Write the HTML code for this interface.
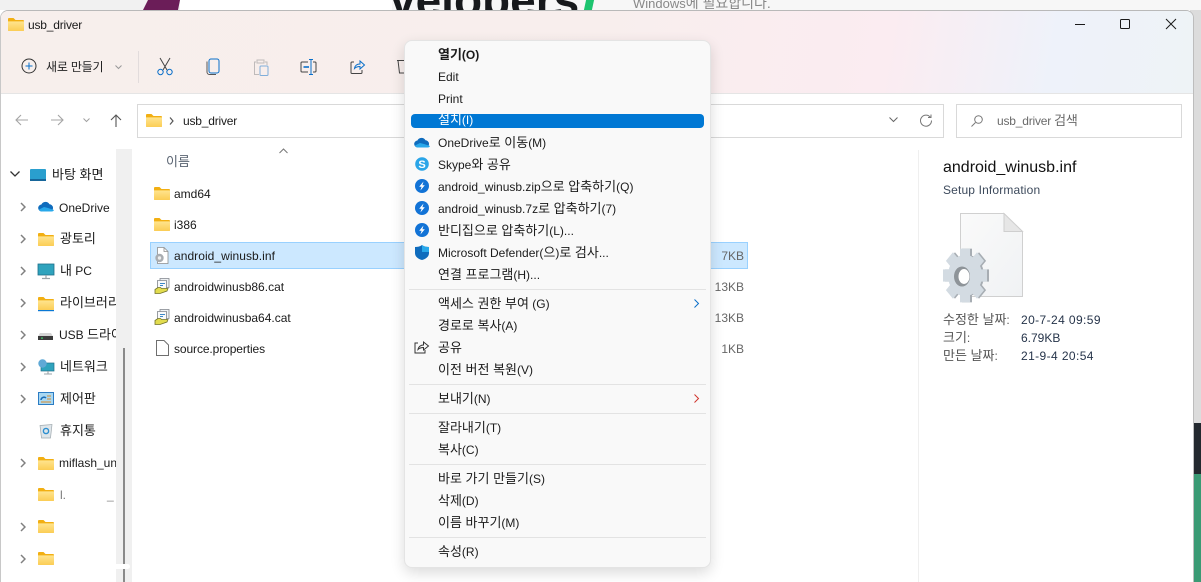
<!DOCTYPE html>
<html lang="ko"><head><meta charset="utf-8">
<style>
html,body{margin:0;padding:0;width:1201px;height:582px;overflow:hidden;background:#fff}
*{box-sizing:border-box}
body{position:relative;font-family:"Liberation Sans","Noto Sans CJK KR",sans-serif;font-size:12px;color:#1a1a1a}
.t{position:absolute;white-space:nowrap;line-height:16px;height:16px;margin-top:1px}
.k{font-size:13px;line-height:14px}
.a{position:absolute}
svg{position:absolute;overflow:visible}
.m{color:#1b1b1b}
.sep{position:absolute;left:409px;width:297px;height:1px;background:#e3e3e3}
.sz{color:#666;text-align:right;width:50px}
.dim{color:#555}
.n{letter-spacing:.4px}
</style></head><body>
<svg width="0" height="0" style="position:absolute"><defs>
<linearGradient id="fg" x1="0" y1="0" x2="0" y2="1"><stop offset="0" stop-color="#ffe48f"/><stop offset="1" stop-color="#fbcd55"/></linearGradient>
<symbol id="folder" viewBox="0 0 16 14"><path d="M0 2a1 1 0 0 1 1-1h4.500l2 2H15a1 1 0 0 1 1 1v9a1 1 0 0 1-1 1H1a1 1 0 0 1-1-1z" fill="#f2af12"/><path d="M0 4.400h16V13a1 1 0 0 1-1 1H1a1 1 0 0 1-1-1z" fill="url(#fg)"/></symbol>
<symbol id="cloud" viewBox="0 0 16 10"><path d="M4 10a3.500 3.500 0 0 1-.6-7A4.500 4.500 0 0 1 11.500 2.800 3.700 3.700 0 0 1 12.500 10z" fill="#0f6cbd"/><path d="M1 8 6 5.500 10 6.500 16 8.500A2.500 2.500 0 0 1 13.500 10H4A3.500 3.500 0 0 1 1 8z" fill="#28a8ea"/></symbol>
<symbol id="bolt" viewBox="0 0 14 14"><circle cx="7" cy="7" r="7" fill="#1273d6"/><path d="M8.500 2.500 4.200 7.800H6.600L5.400 11.500 9.800 6.200H7.400z" fill="#fff"/></symbol>
<symbol id="chev" viewBox="0 0 6 10"><path d="M1 1l4 4-4 4" fill="none" stroke="#808080" stroke-width="1.500"/></symbol>
<symbol id="cat" viewBox="0 0 16 16"><path d="M6 0.500h9v9H6z" fill="#eef1f4" stroke="#7f848b" stroke-width=".8"/><path d="M3.500 2.500h9v9h-9z" fill="#f8f9fa" stroke="#7f848b" stroke-width=".8"/><path d="M6 5.500h5M6 7.500h3" stroke="#3c88c8"/><path d="M1 11.500 4 9.500h2.500l1 1H14l-1 2.500-7 2.500H1z" fill="#e2dc4e" stroke="#72722a" stroke-width=".8"/></symbol>
</defs></svg>

<!-- background behind window -->
<div class="a" style="left:0;top:0;width:1201px;height:10px;background:#f1f1f1"></div>
<div class="a" style="left:180px;top:0;width:212px;height:10px;background:#fff"></div>
<div class="a" style="left:392px;top:0;width:809px;height:10px;background:#f7f7f7"></div>
<svg style="left:0;top:0" width="200" height="11"><path d="M143 10 148 0H180L178 10z" fill="#6b1d58"/></svg>
<div class="a" style="left:0;top:0;width:1201px;height:10px;overflow:hidden">
  <div class="t" style="left:390px;top:-26px;font-size:46px;line-height:50px;height:50px;font-weight:700;color:#17191c">velopers</div>
  <div class="a" style="left:585px;top:0;width:8px;height:10px;background:#1dc46f;transform:skewX(-12deg)"></div>
  <div class="t" style="left:633px;top:-6px;font-size:13px;color:#888">Windows<span style="font-size:14px">에 필요합니다.</span></div>
</div>
<!-- right strip -->
<div class="a" style="left:1190px;top:10px;width:11px;height:413px;background:#dcdcdc"></div>
<div class="a" style="left:1194px;top:423px;width:7px;height:51px;background:#23292f"></div>
<div class="a" style="left:1194px;top:474px;width:7px;height:108px;background:#3a9a74"></div>

<!-- window -->
<div class="a" style="left:0;top:10px;width:1194px;height:572px;background:#fff;border-radius:8px 8px 0 0;border-top:1px solid #b9b9b9;border-right:1px solid #bdbdbd;border-left:1px solid #c8c8c8;overflow:hidden">
  <div class="a" style="left:0;top:0;width:1194px;height:83px;background:linear-gradient(100deg,#f7efec 0%,#f8eeed 50%,#fbecf1 74%,#eef2fa 88%,#eef3f6 100%);border-bottom:1px solid #e5e5e5"></div>
</div>

<!-- titlebar -->
<svg style="left:8px;top:17px" width="16" height="14"><use href="#folder" width="16" height="14"/></svg>
<div class="t" style="left:28px;top:16px;color:#1a1a1a;letter-spacing:-.2px">usb_driver</div>
<svg style="left:1075px;top:17px" width="100" height="14" fill="none" stroke="#1a1a1a" stroke-width="1">
<path d="M0 7.500H10"/><rect x="45.500" y="2.500" width="9" height="9" rx="1"/><path d="M91 2 101 12M101 2 91 12"/></svg>

<!-- toolbar -->
<svg style="left:21px;top:58px" width="16" height="16" fill="none" stroke="#1a1a1a"><circle cx="8" cy="8" r="7" stroke="#333"/><path d="M8 4.500v7M4.500 8h7" stroke="#0a6fc9"/></svg>
<div class="t" style="left:46px;top:58px;color:#222;letter-spacing:-.2px">새로 만들기</div>
<svg style="left:115px;top:65px" width="7" height="5" fill="none" stroke="#999"><path d="M.5.500 3.500 3.500 6.500.500"/></svg>
<div class="a" style="left:138px;top:51px;width:1px;height:32px;background:#e2dcdc"></div>
<svg style="left:157px;top:58px" width="16" height="18" fill="none" stroke="#444"><path d="M3 0l7 12M13 0 6 12"/><circle cx="3.500" cy="14" r="2.700" stroke="#0a6fc9"/><circle cx="12.500" cy="14" r="2.700" stroke="#0a6fc9"/></svg>
<svg style="left:206px;top:58px" width="14" height="17" fill="none"><rect x="3" y="1" width="10" height="14" rx="2" stroke="#0a6fc9"/><path d="M1 3.500V14a2.500 2.500 0 0 0 2.500 2.500H10" stroke="#555"/></svg>
<svg style="left:253px;top:59px" width="16" height="17" fill="none" opacity=".5"><path d="M3 3H1.500V15.500H6M12 3H14V6" stroke="#888"/><rect x="4" y="1" width="7" height="3" stroke="#888"/><rect x="7" y="7" width="8" height="9.500" rx="1" stroke="#0a6fc9"/></svg>
<svg style="left:300px;top:59px" width="17" height="16" fill="none"><path d="M8 3H2a1 1 0 0 0-1 1v8a1 1 0 0 0 1 1h6M13 3h2a1 1 0 0 1 1 1v8a1 1 0 0 1-1 1h-2" stroke="#444"/><path d="M3.500 8H9" stroke="#0a6fc9" stroke-width="1.600"/><path d="M9 .500h4M11 .500v15M9 15.500h4" stroke="#0a6fc9"/></svg>
<svg style="left:350px;top:59px" width="15" height="15" fill="none"><path d="M4 3H2a1 1 0 0 0-1 1v9.500a1 1 0 0 0 1 1h9a1 1 0 0 0 1-1V11" stroke="#444"/><path d="M4.500 9.500C5 6.500 7 5 10 5V2l4.500 4L10 10V7.500C8 7.500 6 8 4.500 9.500z" stroke="#0a6fc9"/></svg>
<svg style="left:397px;top:60px" width="10" height="14" fill="none" stroke="#444"><path d="M0 .500H10M1 .500 2.500 13H8"/></svg>

<!-- nav row -->
<svg style="left:15px;top:114px" width="14" height="12" fill="none" stroke="#a5a5a5" stroke-width="1.100"><path d="M13 6H1M6 1 1 6l5 5"/></svg>
<svg style="left:50px;top:114px" width="14" height="12" fill="none" stroke="#a5a5a5" stroke-width="1.100"><path d="M1 6H13M8 1l5 5-5 5"/></svg>
<svg style="left:83px;top:118px" width="7" height="5" fill="none" stroke="#a0a0a0"><path d="M.5.500 3.500 3.500 6.500.500"/></svg>
<svg style="left:110px;top:114px" width="12" height="13" fill="none" stroke="#555" stroke-width="1.100"><path d="M6 13V1M1 6l5-5 5 5"/></svg>
<div class="a" style="left:137px;top:104px;width:807px;height:34px;background:#fff;border:1px solid #d9d9d9"></div>
<svg style="left:146px;top:113px" width="16" height="14"><use href="#folder" width="16" height="14"/></svg>
<svg style="left:169px;top:117px" width="5" height="8"><path d="M1 .500l3 3.500-3 3.500" fill="none" stroke="#555" stroke-width="1.200"/></svg>
<div class="t" style="left:183px;top:112px;letter-spacing:-.2px">usb_driver</div>
<svg style="left:889px;top:117px" width="9" height="6" fill="none" stroke="#666"><path d="M.5.500 4.500 4.500 8.500.500"/></svg>
<svg style="left:920px;top:114px" width="12" height="12" fill="none" stroke="#777"><path d="M10.500 3.500A5.500 5.500 0 1 0 11.500 6.500"/><path d="M11 .500V3.500H8"/></svg>
<div class="a" style="left:956px;top:104px;width:226px;height:34px;background:#fff;border:1px solid #d9d9d9"></div>
<svg style="left:971px;top:115px" width="12" height="12" fill="none" stroke="#777"><circle cx="7.500" cy="4.500" r="3.800"/><path d="M4.500 7.500 .5 11.500"/></svg>
<div class="t" style="left:997px;top:112px;color:#6a6a6a;letter-spacing:-.2px">usb_driver <span class="k">검색</span></div>

<!-- sidebar -->
<div class="a" style="left:116px;top:149px;width:16px;height:433px;background:#f0f0f0"></div>
<div class="a" style="left:123px;top:348px;width:2px;height:234px;background:#8a8a8a"></div>
<svg style="left:10px;top:171px" width="10" height="6" fill="none" stroke="#333" stroke-width="1.300"><path d="M.5.500 5 5 9.500.500"/></svg>
<svg style="left:30px;top:169px" width="16" height="12"><rect width="16" height="11" rx="1" fill="#2a9fce"/><rect y="10" width="16" height="2" fill="#17669a"/></svg>
<div class="t" style="left:52px;top:166px"><span class="k">바탕 화면</span></div>

<svg style="left:20px;top:202px" width="6" height="10"><use href="#chev" width="6" height="10"/></svg>
<svg style="left:38px;top:201px" width="16" height="11"><use href="#cloud" width="16" height="11"/></svg>
<div class="t" style="left:59px;top:199px">OneDrive</div>

<svg style="left:20px;top:234px" width="6" height="10"><use href="#chev" width="6" height="10"/></svg>
<svg style="left:38px;top:232px" width="16" height="14"><use href="#folder" width="16" height="14"/></svg>
<div class="t" style="left:60px;top:230px"><span class="k">광토리</span></div>

<svg style="left:20px;top:266px" width="6" height="10"><use href="#chev" width="6" height="10"/></svg>
<svg style="left:38px;top:264px" width="16" height="15"><rect width="16" height="11" fill="#2fa3bd" stroke="#1f6f8a" stroke-width=".8"/><path d="M8 11v3M4 14.500h8" stroke="#9aa3a8" stroke-width="1.200"/></svg>
<div class="t" style="left:60px;top:262px"><span class="k">내</span> PC</div>

<svg style="left:20px;top:298px" width="6" height="10"><use href="#chev" width="6" height="10"/></svg>
<svg style="left:38px;top:296px" width="16" height="15"><use href="#folder" width="16" height="14"/><rect y="14" width="16" height="1.200" fill="#0a78d4"/></svg>
<div class="a" style="left:60px;top:294px;width:56px;height:17px;overflow:hidden"><div class="t" style="left:0;top:0"><span class="k">라이브러리</span></div></div>

<svg style="left:20px;top:330px" width="6" height="10"><use href="#chev" width="6" height="10"/></svg>
<svg style="left:38px;top:333px" width="15" height="7"><path d="M2 0H13L15 3.500H0z" fill="#d4d4d4"/><rect y="3" width="15" height="4" fill="#3a3a3a"/><rect x="3" y="4.500" width="2" height="1.200" fill="#3ecf6a"/></svg>
<div class="a" style="left:59px;top:326px;width:57px;height:17px;overflow:hidden"><div class="t" style="left:0;top:0">USB <span class="k">드라이브</span></div></div>

<svg style="left:20px;top:362px" width="6" height="10"><use href="#chev" width="6" height="10"/></svg>
<svg style="left:38px;top:359px" width="16" height="16"><rect x="3" y="4" width="13" height="8" fill="#2fa3bd" stroke="#1f6f8a" stroke-width=".7"/><circle cx="4.500" cy="4.500" r="4.200" fill="#5fa9d6"/><path d="M10 12v2.500M6 15h8" stroke="#9aa3a8" stroke-width="1.100"/></svg>
<div class="t" style="left:60px;top:358px"><span class="k">네트워크</span></div>

<svg style="left:20px;top:394px" width="6" height="10"><use href="#chev" width="6" height="10"/></svg>
<svg style="left:38px;top:392px" width="16" height="13"><rect x=".5" y=".5" width="15" height="12" fill="#a9d8f2" stroke="#2b7cc4"/><path d="M3 8a3 3 0 0 1 5-2" fill="none" stroke="#1b6cb5" stroke-width="1.500"/><path d="M9 4h4M9 7h4M3 10h10" stroke="#d98a2c"/></svg>
<div class="t" style="left:60px;top:390px"><span class="k">제어판</span></div>

<svg style="left:40px;top:423px" width="12" height="15"><path d="M0 2.500 12 1.500 10.500 15H1.500z" fill="#dfe6ea" stroke="#9fa9ae" stroke-width=".7"/><circle cx="6" cy="8" r="2.600" fill="none" stroke="#2d8fd0" stroke-width="1.400"/></svg>
<div class="t" style="left:60px;top:422px"><span class="k">휴지통</span></div>

<svg style="left:20px;top:458px" width="6" height="10"><use href="#chev" width="6" height="10"/></svg>
<svg style="left:38px;top:456px" width="16" height="14"><use href="#folder" width="16" height="14"/></svg>
<div class="a" style="left:59px;top:454px;width:57px;height:17px;overflow:hidden"><div class="t" style="left:0;top:0">miflash_unlock</div></div>

<svg style="left:38px;top:487px" width="16" height="14"><use href="#folder" width="16" height="14"/></svg>
<div class="t" style="left:60px;top:486px;color:#777">l.</div>
<div class="t" style="left:107px;top:486px;color:#888">_</div>

<svg style="left:20px;top:522px" width="6" height="10"><use href="#chev" width="6" height="10"/></svg>
<svg style="left:38px;top:519px" width="16" height="14"><use href="#folder" width="16" height="14"/></svg>
<svg style="left:20px;top:554px" width="6" height="10"><use href="#chev" width="6" height="10"/></svg>
<svg style="left:38px;top:551px" width="16" height="14"><use href="#folder" width="16" height="14"/></svg>
<div class="a" style="left:108px;top:564px;width:22px;height:5px;background:#fff;border-radius:3px"></div>

<!-- file list -->
<div class="t" style="left:166px;top:153px;color:#5a6472"><span class="k">이름</span></div>
<svg style="left:279px;top:148px" width="9" height="6" fill="none" stroke="#777"><path d="M.5 5 4.500 1 8.500 5"/></svg>
<div class="a" style="left:150px;top:242px;width:598px;height:27px;background:#cce8ff;border:1px solid #99d1ff"></div>

<svg style="left:154px;top:186px" width="16" height="14"><use href="#folder" width="16" height="14"/></svg>
<div class="t" style="left:174px;top:185px">amd64</div>
<svg style="left:154px;top:217px" width="16" height="14"><use href="#folder" width="16" height="14"/></svg>
<div class="t" style="left:174px;top:216px">i386</div>
<svg style="left:154px;top:247px" width="15" height="17"><path d="M3.500.500H10L14 4.500V16.500H3.500z" fill="#fff" stroke="#8d8d8d" stroke-width=".8"/><path d="M10 .500V4.500H14" fill="none" stroke="#8d8d8d" stroke-width=".8"/><circle cx="5.500" cy="11" r="4.200" fill="#a9adb1"/><circle cx="5.500" cy="11" r="1.700" fill="#eee"/></svg>
<div class="t" style="left:174px;top:247px;letter-spacing:.05px">android_winusb.inf</div>
<svg style="left:154px;top:278px" width="16" height="16"><use href="#cat" width="16" height="16"/></svg>
<div class="t" style="left:174px;top:278px">androidwinusb86.cat</div>
<svg style="left:154px;top:309px" width="16" height="16"><use href="#cat" width="16" height="16"/></svg>
<div class="t" style="left:174px;top:309px">androidwinusba64.cat</div>
<svg style="left:156px;top:340px" width="13" height="16"><path d="M.5.500H8L12.500 5V15.500H.5z" fill="#fff" stroke="#6f6f6f"/></svg>
<div class="t" style="left:174px;top:340px;letter-spacing:-.1px">source.properties</div>

<div class="t sz" style="left:694px;top:247px">7KB</div>
<div class="t sz" style="left:694px;top:278px">13KB</div>
<div class="t sz" style="left:694px;top:309px">13KB</div>
<div class="t sz" style="left:694px;top:340px">1KB</div>

<!-- details pane -->
<div class="a" style="left:918px;top:150px;width:1px;height:432px;background:#efefef"></div>
<div class="t" style="left:943px;top:157px;font-size:16px;line-height:20px;height:20px;color:#111">android_winusb.inf</div>
<div class="t" style="left:943px;top:181px;color:#3d4a5c;letter-spacing:.15px">Setup Information</div>
<svg style="left:943px;top:212px" width="82" height="92">
<defs><linearGradient id="pg" x1="0" y1="0" x2="1" y2="1"><stop offset="0" stop-color="#fafafa"/><stop offset="1" stop-color="#f0f2f4"/></linearGradient></defs>
<path d="M17.500 1.500H61L79.500 19.500V84.500H17.500z" fill="url(#pg)" stroke="#d0d0d0"/>
<path d="M61 1.500V19.500H79.500z" fill="#e6e6e6" stroke="#cfcfcf"/>
<g transform="translate(24 63.500) scale(1 1.220)" fill="#a7adb3">
<circle r="17"/>
<rect x="-5" y="-22" width="10" height="44"/>
<rect x="-5" y="-22" width="10" height="44" transform="rotate(45)"/>
<rect x="-5" y="-22" width="10" height="44" transform="rotate(90)"/>
<rect x="-5" y="-22" width="10" height="44" transform="rotate(135)"/>
</g>
<g transform="translate(22 63.500) scale(1 1.220)" fill="#d3dbe2">
<circle r="17"/>
<rect x="-5" y="-22" width="10" height="44"/>
<rect x="-5" y="-22" width="10" height="44" transform="rotate(45)"/>
<rect x="-5" y="-22" width="10" height="44" transform="rotate(90)"/>
<rect x="-5" y="-22" width="10" height="44" transform="rotate(135)"/>
</g>
<ellipse cx="19" cy="64.500" rx="8" ry="10" fill="#8e9499"/><ellipse cx="21" cy="64.500" rx="5.500" ry="7.500" fill="#fff"/>
</svg>
<div class="t dim" style="left:943px;top:311px"><span class="k">수정한 날짜</span>:</div><div class="t n" style="left:1021px;top:311px;color:#26344a">20-7-24 09:59</div>
<div class="t dim" style="left:943px;top:329px"><span class="k">크기</span>:</div><div class="t" style="left:1021px;top:329px;color:#26344a">6.79KB</div>
<div class="t dim" style="left:943px;top:347px"><span class="k">만든 날짜</span>:</div><div class="t n" style="left:1021px;top:347px;color:#26344a">21-9-4 20:54</div>

<!-- context menu -->
<div class="a" style="left:404px;top:40px;width:307px;height:528px;background:#f9f9f9;border:1px solid #e4e4e4;border-radius:8px;box-shadow:0 5px 14px rgba(0,0,0,.14)"></div>
<div class="a" style="left:411px;top:114px;width:293px;height:14px;background:#0078d4;border-radius:4px"></div>

<div class="t m" style="left:438px;top:46px;font-weight:700"><span class="k">열기</span>(O)</div>
<div class="t m" style="left:438px;top:68px">Edit</div>
<div class="t m" style="left:438px;top:90px">Print</div>
<div class="t" style="left:438px;top:111px;color:#fff"><span class="k">설치</span>(I)</div>
<svg style="left:414px;top:137px" width="16" height="11"><use href="#cloud" width="16" height="11"/></svg>
<div class="t m" style="left:438px;top:134px">OneDrive<span class="k">로 이동</span>(M)</div>
<svg style="left:415px;top:157px" width="14" height="14"><circle cx="7" cy="7" r="6.800" fill="#2aa5e8"/><text x="7" y="11" font-size="11" font-weight="700" fill="#fff" text-anchor="middle" font-family="Liberation Sans">S</text></svg>
<div class="t m" style="left:438px;top:156px">Skype<span class="k">와 공유</span></div>
<svg style="left:415px;top:179px" width="14" height="14"><use href="#bolt" width="14" height="14"/></svg>
<div class="t m" style="left:438px;top:178px">android_winusb.zip<span class="k">으로 압축하기</span>(Q)</div>
<svg style="left:415px;top:201px" width="14" height="14"><use href="#bolt" width="14" height="14"/></svg>
<div class="t m" style="left:438px;top:200px">android_winusb.7z<span class="k">로 압축하기</span>(7)</div>
<svg style="left:415px;top:223px" width="14" height="14"><use href="#bolt" width="14" height="14"/></svg>
<div class="t m" style="left:438px;top:222px"><span class="k">반디집으로 압축하기</span>(L)...</div>
<svg style="left:415px;top:245px" width="14" height="15"><path d="M7 0C9 1.500 11.500 2 14 2V8C14 11.500 11 14 7 15 3 14 0 11.500 0 8V2C2.500 2 5 1.500 7 0z" fill="#0f6cbd"/><path d="M7 0C9 1.500 11.500 2 14 2V7H7z" fill="#28a8ea"/></svg>
<div class="t m" style="left:438px;top:244px">Microsoft Defender(<span class="k">으</span>)<span class="k">로 검사</span>...</div>
<div class="t m" style="left:438px;top:266px"><span class="k">연결 프로그램</span>(H)...</div>
<div class="sep" style="top:289px"></div>
<div class="t m" style="left:438px;top:295px"><span class="k">액세스 권한 부여</span> (G)</div>
<svg style="left:694px;top:299px" width="5" height="9" fill="none" stroke="#0a6fc9"><path d="M.5.500 4.500 4.500.5 8.500"/></svg>
<div class="t m" style="left:438px;top:317px"><span class="k">경로로 복사</span>(A)</div>
<svg style="left:414px;top:340px" width="15" height="14" fill="none" stroke="#333"><path d="M4 3H1V13H11V10"/><path d="M4 9.500C4.500 6.500 7 5 9.500 5V2L14.500 6 9.500 10V7.500C7.500 7.500 5.500 8 4 9.500z"/></svg>
<div class="t m" style="left:438px;top:339px"><span class="k">공유</span></div>
<div class="t m" style="left:438px;top:361px"><span class="k">이전 버전 복원</span>(V)</div>
<div class="sep" style="top:384px"></div>
<div class="t m" style="left:438px;top:390px"><span class="k">보내기</span>(N)</div>
<svg style="left:694px;top:394px" width="5" height="9" fill="none" stroke="#d0342c"><path d="M.5.500 4.500 4.500.5 8.500"/></svg>
<div class="sep" style="top:413px"></div>
<div class="t m" style="left:438px;top:419px"><span class="k">잘라내기</span>(T)</div>
<div class="t m" style="left:438px;top:441px"><span class="k">복사</span>(C)</div>
<div class="sep" style="top:464px"></div>
<div class="t m" style="left:438px;top:470px"><span class="k">바로 가기 만들기</span>(S)</div>
<div class="t m" style="left:438px;top:492px"><span class="k">삭제</span>(D)</div>
<div class="t m" style="left:438px;top:514px"><span class="k">이름 바꾸기</span>(M)</div>
<div class="sep" style="top:537px"></div>
<div class="t m" style="left:438px;top:543px"><span class="k">속성</span>(R)</div>
</body></html>
